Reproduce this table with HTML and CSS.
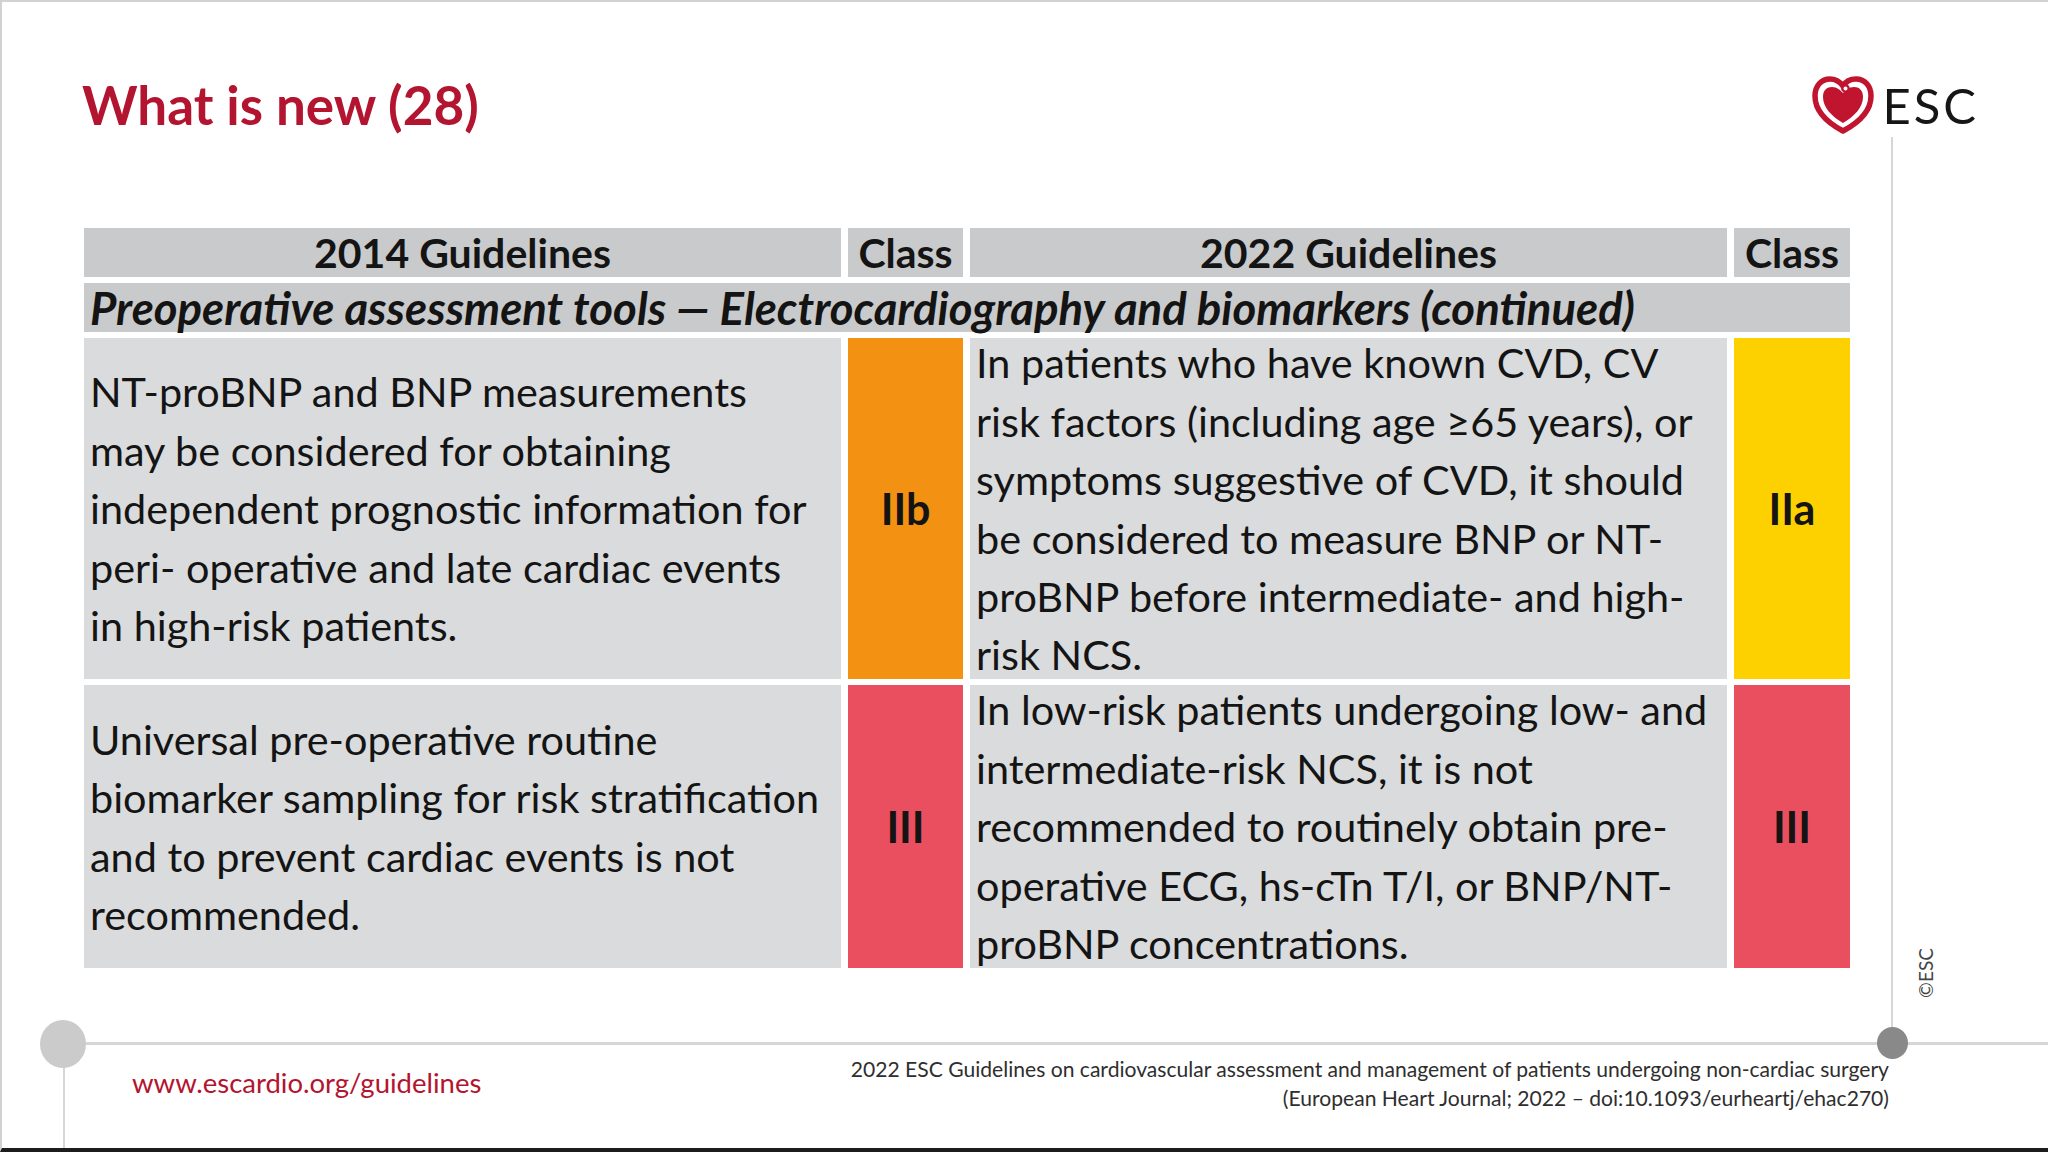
FILE: index.html
```html
<!DOCTYPE html>
<html lang="en">
<head>
<meta charset="utf-8">
<title>What is new (28)</title>
<link rel="stylesheet" href="styles.css">
</head>
<body>
<div class="slide">
  <header class="top">
    <h1 class="title">What is new (28)</h1>
    <div class="logo">
      <svg class="heart" viewBox="0 0 62 58" width="62" height="58" aria-hidden="true">
        <path d="M31 55 C 14 46, 3 35, 3 20 C 3 9, 10 3, 18 3 C 24 3, 28 6, 31 10 C 34 5, 38 3, 44 3 C 53 3, 59 10, 59 20 C 59 35, 48 46, 31 55 Z" fill="none" stroke="#c0142f" stroke-width="5.5" stroke-linejoin="round"/>
        <path d="M31 47 C 19 40, 11 31, 11 21 C 11 14, 15 11, 20 11 C 25 11, 28 14, 31 17 C 34 14, 37 11, 42 11 C 47 11, 51 14, 51 21 C 51 31, 43 40, 31 47 Z" fill="#c0142f"/>
        <circle cx="33.5" cy="12.5" r="3.2" fill="#fff" stroke="#c0142f" stroke-width="2.4"/>
      </svg>
      <span class="logo-text">ESC</span>
    </div>
  </header>

  <div class="grid">
    <div class="cell head">2014 Guidelines</div>
    <div class="cell head">Class</div>
    <div class="cell head">2022 Guidelines</div>
    <div class="cell head">Class</div>

    <div class="cell section">Preoperative assessment tools — Electrocardiography and biomarkers (continued)</div>

    <div class="cell body"><p>NT-proBNP and BNP measurements<br>may be considered for obtaining<br>independent prognostic information for<br>peri- operative and late cardiac events<br>in high-risk patients.</p></div>
    <div class="cell cls orange">IIb</div>
    <div class="cell body"><p>In patients who have known CVD, CV<br>risk factors (including age ≥65 years), or<br>symptoms suggestive of CVD, it should<br>be considered to measure BNP or NT-<br>proBNP before intermediate- and high-<br>risk NCS.</p></div>
    <div class="cell cls yellow">IIa</div>

    <div class="cell body"><p>Universal pre-operative routine<br>biomarker sampling for risk stratification<br>and to prevent cardiac events is not<br>recommended.</p></div>
    <div class="cell cls red">III</div>
    <div class="cell body"><p>In low-risk patients undergoing low- and<br>intermediate-risk NCS, it is not<br>recommended to routinely obtain pre-<br>operative ECG, hs-cTn T/I, or BNP/NT-<br>proBNP concentrations.</p></div>
    <div class="cell cls red">III</div>
  </div>

  <footer class="foot">
    <a class="url">www.escardio.org/guidelines</a>
    <p class="cite">2022 ESC Guidelines on cardiovascular assessment and management of patients undergoing non-cardiac surgery<br>(European Heart Journal; 2022 – doi:10.1093/eurheartj/ehac270)</p>
  </footer>

  <div class="deco vline-right"></div>
  <div class="deco hline"></div>
  <div class="deco vline-left"></div>
  <div class="deco dot-left"></div>
  <div class="deco dot-right"></div>
  <div class="deco copy">©ESC</div>
</div>
</body>
</html>
```

FILE: styles.css
```css
html, body {
  margin: 0;
  padding: 0;
  background: #ffffff;
}

.slide {
  position: relative;
  width: 2048px;
  height: 1152px;
  box-sizing: border-box;
  border-top: 2px solid #d2d2d2;
  border-left: 2px solid #d2d2d2;
  border-bottom: 4px solid #1c1c1c;
  font-family: Lato, "Open Sans", "Liberation Sans", sans-serif;
  color: #141414;
  overflow: hidden;
}

.top {
  display: flex;
  justify-content: space-between;
  align-items: flex-start;
  height: 226px;
  box-sizing: border-box;
  padding: 70px 69px 0 80px;
}

.title {
  margin: 0;
  font-size: 53px;
  line-height: 65px;
  font-weight: 700;
  color: #b3142f;
}

.logo {
  display: flex;
  align-items: center;
  gap: 8px;
  margin-top: 4px;
}

.heart {
  display: block;
}

.logo-text {
  font-size: 49px;
  line-height: 58px;
  letter-spacing: 3px;
  color: #161616;
  font-weight: 400;
}

.grid {
  display: grid;
  grid-template-columns: 757px 115px 757px 116px;
  grid-template-rows: 49px 49px 341px 283px;
  column-gap: 7px;
  row-gap: 6px;
  margin-left: 82px;
  width: 1766px;
}

.cell {
  display: flex;
  align-items: center;
  box-sizing: border-box;
  background: #dadbdc;
}

.head {
  background: #c9cacb;
  justify-content: center;
  font-weight: 700;
  font-size: 41px;
  line-height: 49px;
}

.section {
  grid-column: 1 / -1;
  background: #c9cacb;
  padding-left: 6px;
  font-weight: 700;
  font-style: italic;
  font-size: 45.5px;
  line-height: 49px;
  white-space: nowrap;
}

.body {
  padding: 0 6px;
}

.body p {
  margin: 0;
  font-size: 41.4px;
  line-height: 58.4px;
  white-space: nowrap;
}

.cls {
  justify-content: center;
  font-weight: 700;
  font-size: 43px;
}

.orange { background: #f39212; }
.yellow { background: #fdd000; }
.red { background: #e94f5f; }

.foot {
  display: flex;
  justify-content: space-between;
  align-items: flex-start;
  margin-top: 86px;
  padding: 0 159px 0 130px;
}

.url {
  margin-top: 13px;
  font-size: 27.5px;
  line-height: 32px;
  color: #b3142f;
  text-decoration: none;
}

.cite {
  margin: 0;
  text-align: right;
  font-size: 21.1px;
  line-height: 29px;
  color: #2e2e2e;
}

.deco {
  position: absolute;
}

.vline-right {
  left: 1889px;
  top: 135px;
  width: 2px;
  height: 906px;
  background: #d6d6d6;
}

.hline {
  left: 61px;
  top: 1040px;
  right: 0;
  height: 3px;
  background: #d6d6d6;
}

.vline-left {
  left: 61px;
  top: 1041px;
  width: 2px;
  bottom: 0;
  background: #d6d6d6;
}

.dot-left {
  left: 38px;
  top: 1018px;
  width: 46px;
  height: 48px;
  border-radius: 50%;
  background: #cbcbcb;
}

.dot-right {
  left: 1875px;
  top: 1025px;
  width: 31px;
  height: 32px;
  border-radius: 50%;
  background: #898989;
}

.copy {
  left: 1892px;
  top: 960px;
  width: 64px;
  height: 22px;
  font-size: 19px;
  line-height: 22px;
  color: #444;
  transform: rotate(-90deg);
  text-align: center;
}
```
